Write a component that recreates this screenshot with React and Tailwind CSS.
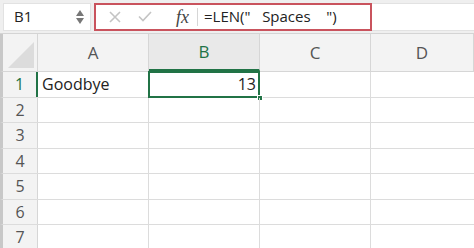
const cols = [
  { key: 'A', w: 'w-[111px]' },
  { key: 'B', w: 'w-[111px]' },
  { key: 'C', w: 'w-[111px]' },
  { key: 'D', w: 'flex-1' },
];

const rows = [1, 2, 3, 4, 5, 6, 7];

const App = () => {
  return (
    <div className="w-[474px] h-[248px] overflow-hidden bg-white font-['Open_Sans',sans-serif] text-[#222]">
      {/* Formula bar */}
      <div className="h-[34px] bg-[#efefef] flex items-center pl-[3px] gap-[3px] border-b border-[#d4d4d4]">
        <div className="w-[88px] h-[28px] bg-white flex items-center justify-between pl-[10px] pr-[6px] text-[15px] border border-[#e2e2e2]">
          <span>B1</span>
          <div className="flex flex-col items-center gap-[2px]">
            <svg width="8" height="6" viewBox="0 0 8 6"><path d="M4 0 L8 6 L0 6 Z" fill="#777" /></svg>
            <svg width="8" height="6" viewBox="0 0 8 6"><path d="M0 0 L8 0 L4 6 Z" fill="#777" /></svg>
          </div>
        </div>
        <div className="flex-1 h-[28px] bg-white flex items-center border-y border-[#e2e2e2]">
          <div className="w-[278px] h-[28px] border-2 border-[#c9535d] flex items-center">
            <svg className="ml-[13px]" width="12" height="12" viewBox="0 0 12 12">
              <path d="M1 1 L11 11 M11 1 L1 11" stroke="#c4c4c4" strokeWidth="1.6" />
            </svg>
            <svg className="ml-[17px]" width="14" height="11" viewBox="0 0 14 11">
              <path d="M1 5.5 L5 9.5 L13 1" stroke="#c4c4c4" strokeWidth="1.6" fill="none" />
            </svg>
            <span className="ml-[24px] font-['Liberation_Serif',serif] italic text-[18px] text-[#444] leading-none">fx</span>
            <div className="ml-[8px] w-px h-[18px] bg-[#d6d6d6]" />
            <span className="ml-[6px] text-[15px] whitespace-pre">=LEN("   Spaces    ")</span>
          </div>
        </div>
      </div>

      {/* Column headers */}
      <div className="flex h-[38px] bg-[#f3f3f3] border-b border-[#d6d6d6] border-l-[3px] border-l-[#c8c8c8]">
        <div className="w-[35px] relative border-r border-[#d6d6d6]">
          <svg className="absolute right-[3px] bottom-[3px]" width="26" height="26" viewBox="0 0 26 26">
            <path d="M26 0 L26 26 L0 26 Z" fill="#dcdcdc" />
          </svg>
        </div>
        {cols.map((c) => (
          <div
            key={c.key}
            className={`${c.w} flex items-center justify-center text-[17px] border-r border-[#d6d6d6] ${
              c.key === 'B' ? 'bg-[#e9e9e9] text-[#217346] border-b-2 border-b-[#217346]' : 'text-[#555]'
            }`}
          >
            {c.key}
          </div>
        ))}
      </div>

      {/* Rows */}
      {rows.map((r) => (
        <div key={r} className="flex h-[25.5px] border-b border-[#dcdcdc] border-l-[3px] border-l-[#c8c8c8]">
          <div
            className={`w-[35px] flex items-center justify-center text-[16px] bg-[#f3f3f3] ${
              r === 1 ? 'text-[#217346] border-r-2 border-r-[#217346]' : 'text-[#555] border-r border-[#d6d6d6]'
            }`}
          >
            {r}
          </div>
          <div className="w-[111px] flex items-center pl-[4px] text-[16px] border-r border-[#dcdcdc]">
            {r === 1 ? 'Goodbye' : ''}
          </div>
          <div className="w-[111px] relative flex items-center justify-end pr-[3px] text-[16px] border-r border-[#dcdcdc]">
            {r === 1 && (
              <>
                <div className="absolute -inset-[1px] border-2 border-[#217346]" />
                <div className="absolute -right-[4px] -bottom-[4px] w-[6px] h-[6px] bg-[#217346] border border-white" />
                <span className="relative">13</span>
              </>
            )}
          </div>
          <div className="w-[111px] border-r border-[#dcdcdc]" />
          <div className="flex-1" />
        </div>
      ))}
    </div>
  );
};

export default App;
